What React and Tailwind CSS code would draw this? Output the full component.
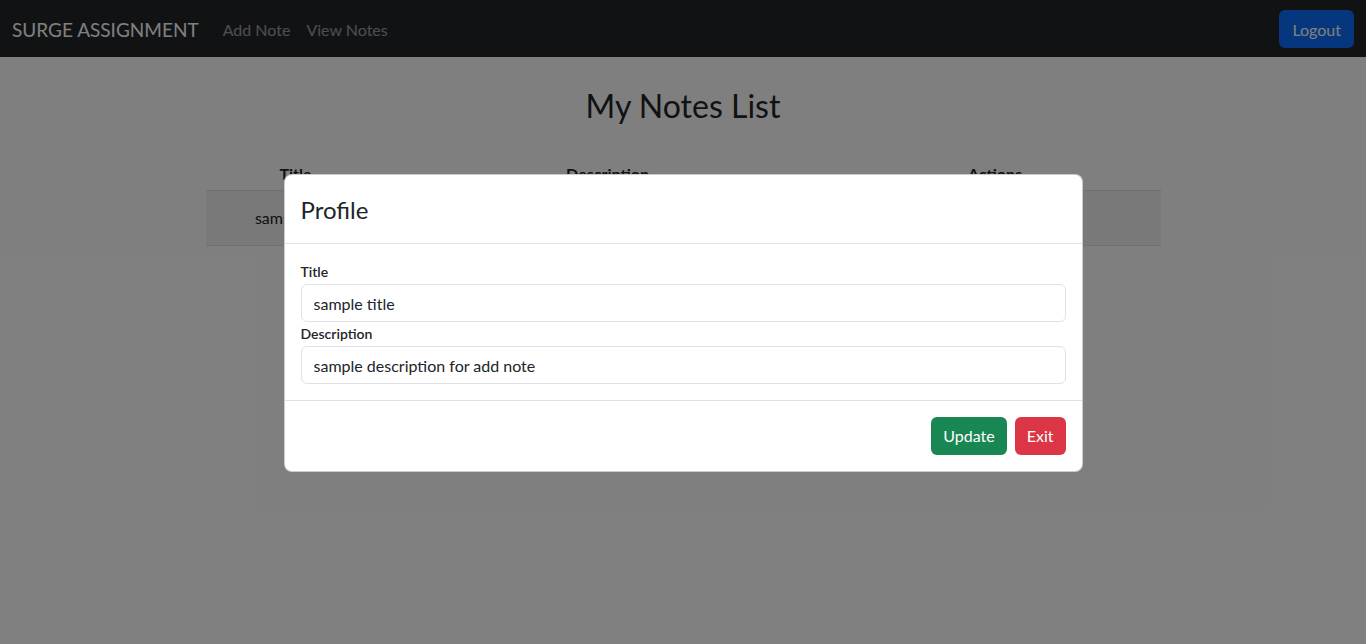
import { useState } from 'react';

const notes = [
  { id: 1, title: 'sample title', description: 'sample description for add note' },
];

const Navbar = () => (
  <nav className="h-[57px] bg-[#212529] flex items-center justify-between px-3">
    <div className="flex items-center pt-[3px]">
      <span className="text-[19px] text-white mr-4 leading-[30px]">SURGE ASSIGNMENT</span>
      <a className="px-2 text-[16px] text-white/55">Add Note</a>
      <a className="px-2 text-[16px] text-white/55">View Notes</a>
    </div>
    <button className="h-[38px] px-[13px] rounded-md bg-[#0d6efd] text-white text-[16px] pt-[2px] mt-px">Logout</button>
  </nav>
);

const NotesTable = () => (
  <div className="w-[955px] mx-auto">
    <div className="flex font-bold text-[16px] border-b border-[#dee2e6] h-[34px] items-center">
      <div className="w-[180px] text-center">Title</div>
      <div className="w-[444px] text-center">Description</div>
      <div className="w-[331px] text-center">Actions</div>
    </div>
    {notes.map((n) => (
      <div key={n.id} className="flex items-center bg-[#f2f2f2] border-b border-[#dee2e6] h-[55px] text-[16px]">
        <div className="w-[180px] text-center">{n.title}</div>
        <div className="w-[444px] text-center">{n.description}</div>
        <div className="w-[331px] flex justify-center gap-2">
          <button className="h-[38px] px-3 rounded-md bg-[#0d6efd] text-white">Edit</button>
          <button className="h-[38px] px-3 rounded-md bg-[#dc3545] text-white">Delete</button>
        </div>
      </div>
    ))}
  </div>
);

const EditModal = ({ note }) => {
  const [title, setTitle] = useState(note.title);
  const [description, setDescription] = useState(note.description);

  return (
    <div className="absolute inset-0 bg-black/50">
      <div className="w-[799px] mx-auto mt-[174px] bg-white rounded-lg border border-black/20 text-[#212529]">
        <div className="px-4 pt-[17px] pb-[15px] border-b border-[#dee2e6]">
          <h4 className="text-[24px] leading-9">Profile</h4>
        </div>
        <div className="p-4">
          <label className="block text-[14px] font-semibold leading-6">Title</label>
          <input
            className="w-full h-[38px] px-3 border border-[#dee2e6] rounded-md text-[16px] outline-none"
            value={title}
            onChange={(e) => setTitle(e.target.value)}
          />
          <label className="block text-[14px] font-semibold leading-6">Description</label>
          <input
            className="w-full h-[38px] px-3 border border-[#dee2e6] rounded-md text-[16px] outline-none"
            value={description}
            onChange={(e) => setDescription(e.target.value)}
          />
        </div>
        <div className="border-t border-[#dee2e6] px-4 py-4 flex justify-end gap-2">
          <button className="h-[38px] px-3 rounded-md bg-[#198754] text-white text-[16px]">Update</button>
          <button className="h-[38px] px-3 rounded-md bg-[#dc3545] text-white text-[16px]">Exit</button>
        </div>
      </div>
    </div>
  );
};

export default function App() {
  return (
    <div className="relative min-h-[644px] bg-white text-[#212529] font-['Lato',sans-serif]">
      <Navbar />
      <h2 className="text-[32px] text-center leading-[38px] mt-[30px] mb-[32px]">My Notes List</h2>
      <NotesTable />
      <EditModal note={notes[0]} />
    </div>
  );
}
